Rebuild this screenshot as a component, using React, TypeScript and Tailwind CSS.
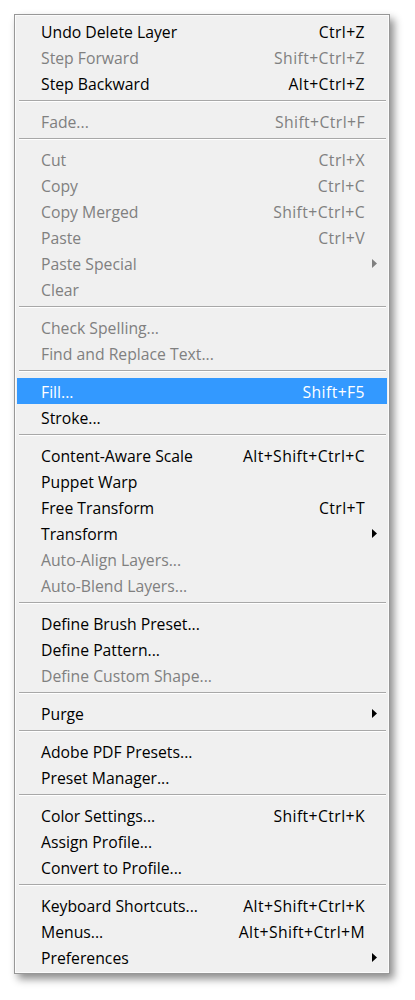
import React from "react";

type Item =
  | { sep: true }
  | {
      sep?: false;
      label: string;
      shortcut?: string;
      sub?: boolean;
      disabled?: boolean;
      active?: boolean;
    };

const items: Item[] = [
  { label: "Undo Delete Layer", shortcut: "Ctrl+Z" },
  { label: "Step Forward", shortcut: "Shift+Ctrl+Z", disabled: true },
  { label: "Step Backward", shortcut: "Alt+Ctrl+Z" },
  { sep: true },
  { label: "Fade...", shortcut: "Shift+Ctrl+F", disabled: true },
  { sep: true },
  { label: "Cut", shortcut: "Ctrl+X", disabled: true },
  { label: "Copy", shortcut: "Ctrl+C", disabled: true },
  { label: "Copy Merged", shortcut: "Shift+Ctrl+C", disabled: true },
  { label: "Paste", shortcut: "Ctrl+V", disabled: true },
  { label: "Paste Special", sub: true, disabled: true },
  { label: "Clear", disabled: true },
  { sep: true },
  { label: "Check Spelling...", disabled: true },
  { label: "Find and Replace Text...", disabled: true },
  { sep: true },
  { label: "Fill...", shortcut: "Shift+F5", active: true },
  { label: "Stroke..." },
  { sep: true },
  { label: "Content-Aware Scale", shortcut: "Alt+Shift+Ctrl+C" },
  { label: "Puppet Warp" },
  { label: "Free Transform", shortcut: "Ctrl+T" },
  { label: "Transform", sub: true },
  { label: "Auto-Align Layers...", disabled: true },
  { label: "Auto-Blend Layers...", disabled: true },
  { sep: true },
  { label: "Define Brush Preset..." },
  { label: "Define Pattern..." },
  { label: "Define Custom Shape...", disabled: true },
  { sep: true },
  { label: "Purge", sub: true },
  { sep: true },
  { label: "Adobe PDF Presets..." },
  { label: "Preset Manager..." },
  { sep: true },
  { label: "Color Settings...", shortcut: "Shift+Ctrl+K" },
  { label: "Assign Profile..." },
  { label: "Convert to Profile..." },
  { sep: true },
  { label: "Keyboard Shortcuts...", shortcut: "Alt+Shift+Ctrl+K" },
  { label: "Menus...", shortcut: "Alt+Shift+Ctrl+M" },
  { label: "Preferences", sub: true },
];

const Arrow = ({ color }: { color: string }) => (
  <svg width="5" height="9" viewBox="0 0 5 9" className="block">
    <path d="M0 0 L5 4.5 L0 9 Z" fill={color} />
  </svg>
);

export default function App() {
  return (
    <div className="min-h-screen bg-white pl-[14px] pt-[14px] font-['Open_Sans',sans-serif]">
      <div className="w-[376px] border border-[#979797] bg-[#f0f0f0] shadow-[4px_5px_8px_rgba(0,0,0,0.45)]">
        <div className="border border-white/70 px-px py-[2px]">
          {items.map((item, i) => {
            if (item.sep) {
              return (
                <div key={i} className="h-[12px] pt-[4px] pl-[2px] pr-px">
                  <div className="h-px bg-[#a8a8a8]" />
                  <div className="h-px bg-white" />
                </div>
              );
            }
            const color = item.active
              ? "text-white"
              : item.disabled
              ? "text-[#808080]"
              : "text-black";
            return (
              <div
                key={i}
                className={`relative flex h-[26px] items-center pt-[3px] pl-[24px] pr-[22px] text-[15.75px] ${color} ${
                  item.active ? "bg-[#3399ff]" : ""
                }`}
              >
                <span className="flex-1 whitespace-nowrap">{item.label}</span>
                {item.shortcut && (
                  <span className="whitespace-nowrap tracking-[0.4px]">
                    {item.shortcut}
                  </span>
                )}
                {item.sub && (
                  <span className="absolute right-[10px] top-[9px]">
                    <Arrow color={item.disabled ? "#808080" : "#000"} />
                  </span>
                )}
              </div>
            );
          })}
        </div>
      </div>
    </div>
  );
}
